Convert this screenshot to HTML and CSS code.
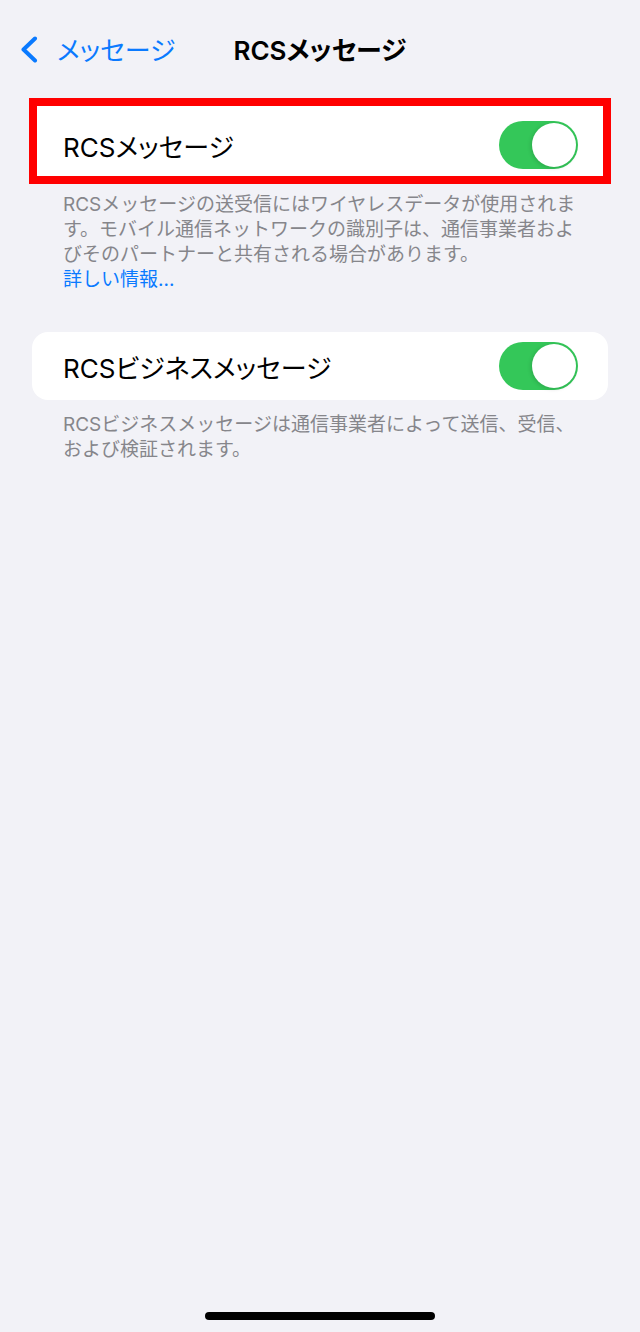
FILE: index.html
```html
<!DOCTYPE html>
<html lang="ja">
<head>
  <meta charset="UTF-8">
  <title>RCSメッセージ</title>
  <link rel="stylesheet" href="styles.css">
</head>
<body>

  <header class="nav">
    <a class="nav-back" href="#">
      <svg width="18" height="27" viewBox="0 0 18 27" aria-hidden="true">
        <path d="M15 2.5 L3.5 13.5 L15 24.5" fill="none" stroke="currentColor" stroke-width="4" stroke-linecap="round" stroke-linejoin="round"/>
      </svg>
      <span>メッセージ</span>
    </a>
    <h1 class="nav-title">RCSメッセージ</h1>
    <span></span>
  </header>

  <section class="group">
    <div class="cell cell--marked">
      <span class="cell-label">RCSメッセージ</span>
      <span class="switch" role="switch" aria-checked="true"><span class="switch-knob"></span></span>
    </div>
    <p class="group-footer">
      RCSメッセージの送受信にはワイヤレスデータが使用されます。モバイル通信ネットワークの識別子は、通信事業者およびそのパートナーと共有される場合があります。<br>
      <a href="#">詳しい情報...</a>
    </p>
  </section>

  <section class="group">
    <div class="cell">
      <span class="cell-label">RCSビジネスメッセージ</span>
      <span class="switch" role="switch" aria-checked="true"><span class="switch-knob"></span></span>
    </div>
    <p class="group-footer">
      RCSビジネスメッセージは通信事業者によって送信、受信、および検証されます。
    </p>
  </section>

  <div class="home-indicator"></div>

</body>
</html>
```

FILE: styles.css
```css
body {
  background: #f2f2f7;
  color: #000;
  display: flex;
  flex-direction: column;
  font-family: "Inter", "Noto Sans CJK JP", sans-serif;
  margin: 0;
  min-height: 1332px;
}

a {
  color: #0a7aff;
  text-decoration: none;
}

.nav {
  align-items: center;
  display: grid;
  grid-template-columns: 1fr auto 1fr;
  height: 96px;
  padding-left: 20px;
  padding-right: 20px;
}

.nav-back {
  align-items: center;
  display: flex;
  font-size: 26px;
  font-feature-settings: "palt";
  gap: 19px;
}

.nav-back svg {
  margin-top: 3px;
}

.nav-title {
  font-feature-settings: "palt";
  font-size: 26px;
  font-weight: 600;
  margin: 0;
}

.group {
  margin-bottom: 40px;
}

.cell {
  align-items: center;
  background: #fff;
  border-radius: 16px;
  display: flex;
  height: 68px;
  justify-content: space-between;
  margin: 0 32px;
  padding: 0 30px 0 31px;
}

.cell--marked {
  border: 8px solid #ff0000;
  border-radius: 0;
  height: 62px;
  margin: 2px 29px 0;
  padding: 8px 25px 0 26px;
}

.cell-label {
  font-feature-settings: "palt";
  font-size: 26px;
}

.switch {
  background: #34c759;
  border-radius: 24px;
  display: flex;
  height: 48px;
  justify-content: flex-end;
  padding: 2px;
  box-sizing: border-box;
  width: 79px;
}

.switch-knob {
  background: #fff;
  border-radius: 50%;
  box-shadow: -1px 1px 4px rgba(0, 0, 0, .15);
  height: 44px;
  width: 44px;
}

.group-footer {
  color: #86868b;
  font-size: 19px;
  line-height: 25px;
  margin: 0 59px 0 63px;
  padding-top: 12px;
}

.cell--marked + .group-footer {
  padding-top: 8px;
}

.home-indicator {
  align-self: center;
  background: #000;
  border-radius: 4px;
  height: 8px;
  margin-bottom: 12px;
  margin-top: auto;
  width: 230px;
}
```
